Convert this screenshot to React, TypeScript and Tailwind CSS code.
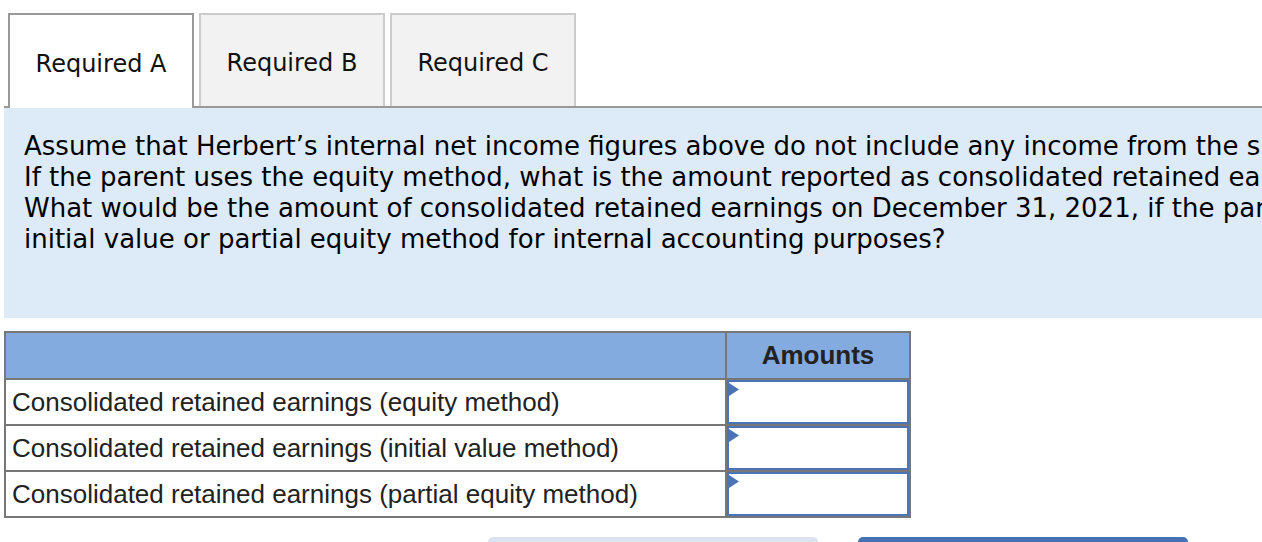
import React from "react";

const verdana = { fontFamily: '"DejaVu Sans", Verdana, sans-serif' };

function Tab({ label, active }: { label: string; active?: boolean }) {
  if (active) {
    return (
      <div className="relative z-10 -mb-[2px] flex h-[95px] w-[186px] items-center justify-center border-2 border-b-0 border-[#999999] bg-white pt-[4px] text-[24px] text-[#111]">
        {label}
      </div>
    );
  }
  return (
    <div className="flex h-[93px] w-[186px] items-center justify-center border-2 border-b-0 border-[#cccccc] bg-[#f2f2f2] pt-[4px] text-[24px] text-[#111]">
      {label}
    </div>
  );
}

function Triangle() {
  return (
    <svg className="absolute left-0 top-[1px]" width="10" height="13" viewBox="0 0 10 13">
      <polygon points="0,0 10,6.5 0,13" fill="#4a74b4" />
    </svg>
  );
}

function Row({ label }: { label: string }) {
  return (
    <div className="flex h-[46px] border-t-2 border-[#777777]">
      <div className="flex w-[719px] items-center pl-[6px] text-[26px] text-[#222]">{label}</div>
      <div className="flex flex-1 border-l-2 border-[#777777]">
        <div className="relative flex-1 border-2 border-[#4a74b4] bg-white">
          <Triangle />
        </div>
      </div>
    </div>
  );
}

export default function App() {
  return (
    <div className="h-[542px] w-[1262px] overflow-hidden bg-white" style={verdana}>
      <div className="pl-[4px] pt-[13px]">
        <div className="flex gap-[5px] border-b-2 border-[#999999] pl-[4px]">
          <Tab label="Required A" active />
          <Tab label="Required B" />
          <Tab label="Required C" />
        </div>
        <div className="h-[210px] bg-[#ddeaf8] pl-[20px] pt-[23px] text-[26px] leading-[31px] text-black">
          <div className="whitespace-nowrap">
            Assume that Herbert’s internal net income figures above do not include any income from the subsidiary.
          </div>
          <div className="whitespace-nowrap">
            If the parent uses the equity method, what is the amount reported as consolidated retained earnings at December 31, 2021?
          </div>
          <div className="whitespace-nowrap">
            What would be the amount of consolidated retained earnings on December 31, 2021, if the parent had applied the
          </div>
          <div className="whitespace-nowrap">initial value or partial equity method for internal accounting purposes?</div>
        </div>
        <div
          className="mt-[13px] w-[907px] border-2 border-t-2 border-[#777777]"
          style={{ fontFamily: '"Liberation Sans", Arial, sans-serif' }}
        >
          <div className="flex h-[45px] bg-[#84abdf]">
            <div className="w-[719px]" />
            <div className="flex flex-1 items-center justify-center border-l-2 border-[#777777] text-[26px] font-bold text-[#222]">
              Amounts
            </div>
          </div>
          <Row label="Consolidated retained earnings (equity method)" />
          <Row label="Consolidated retained earnings (initial value method)" />
          <Row label="Consolidated retained earnings (partial equity method)" />
        </div>
        <div className="mt-[19px] flex gap-[40px] pl-[484px]">
          <div className="h-[40px] w-[330px] rounded-[5px] bg-[#dae3ef]" />
          <div className="h-[40px] w-[330px] rounded-[5px] bg-[#4472b4]" />
        </div>
      </div>
    </div>
  );
}
